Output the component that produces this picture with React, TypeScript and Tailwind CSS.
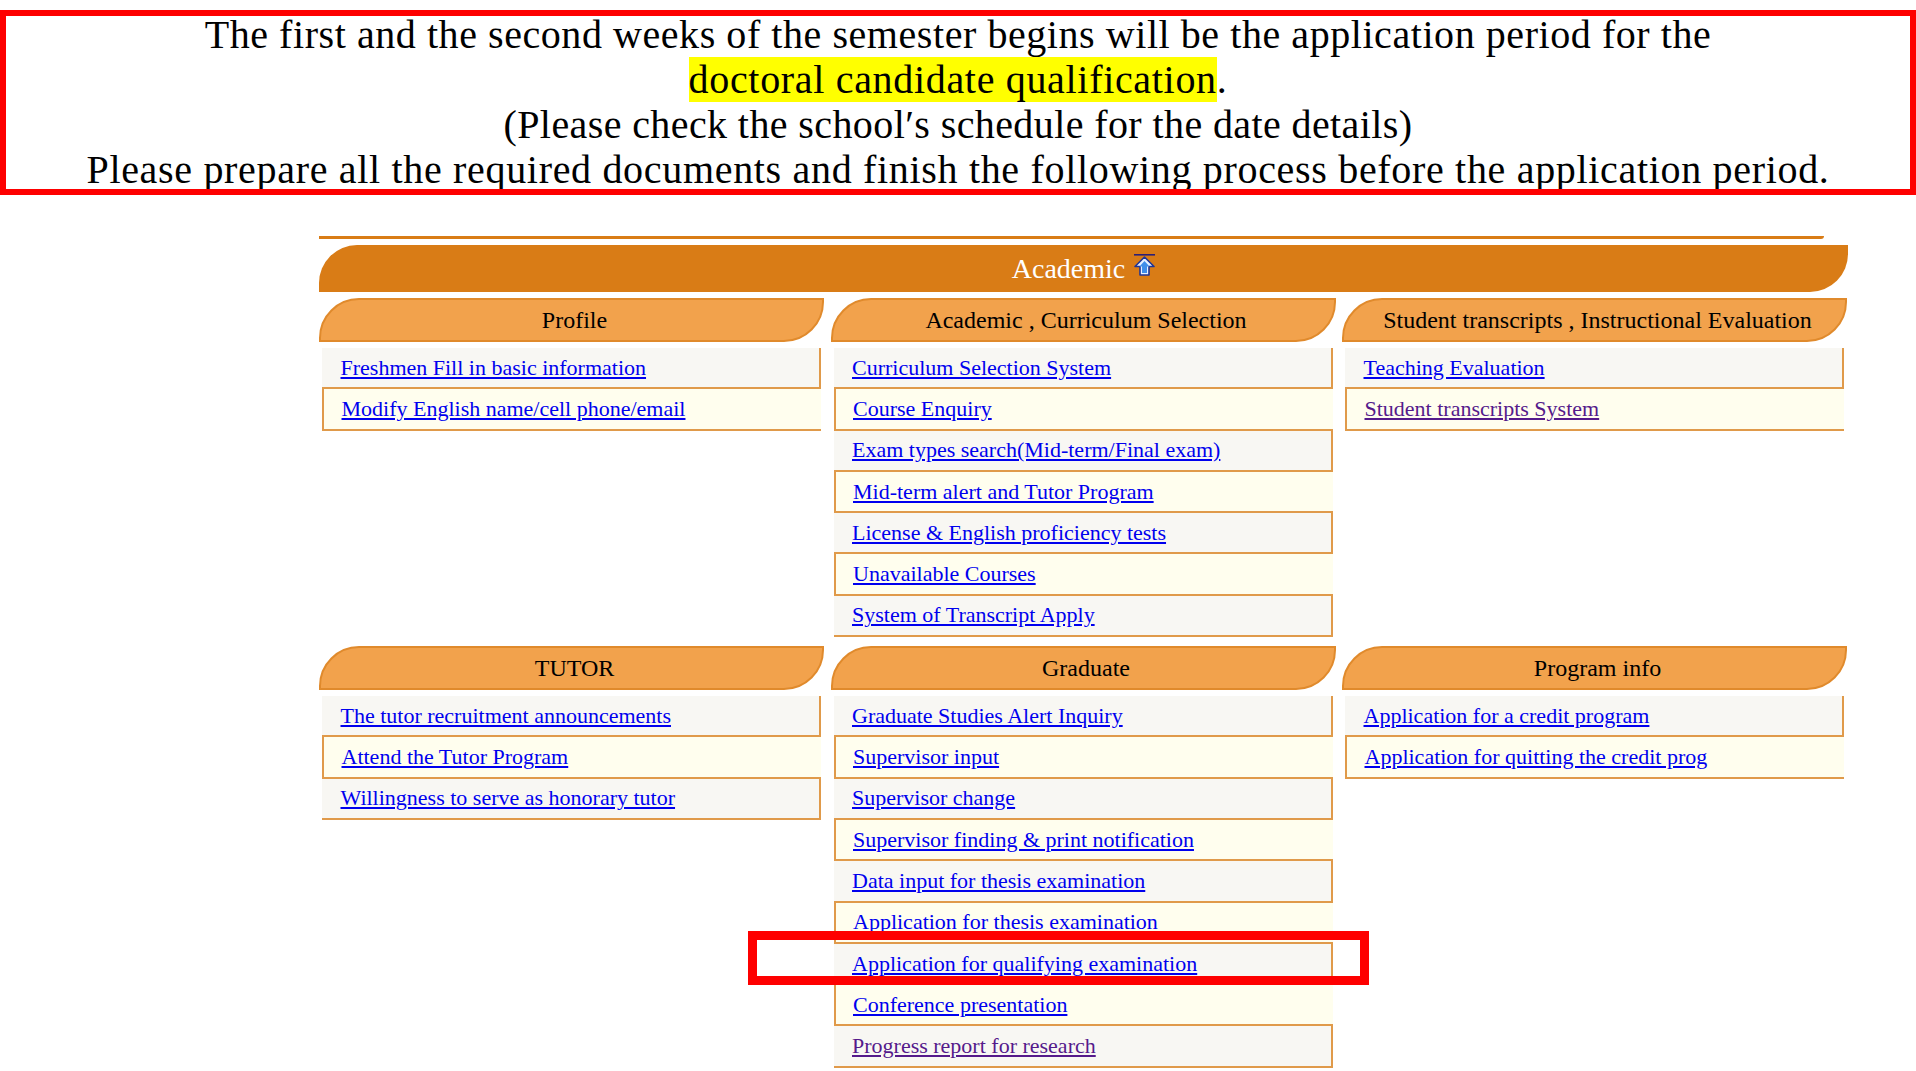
const sections: { title: string; links: [string, boolean?][] }[] = [
  { title: "Profile", links: [["Freshmen Fill in basic information"], ["Modify English name/cell phone/email"]] },
  {
    title: "Academic , Curriculum Selection",
    links: [
      ["Curriculum Selection System"],
      ["Course Enquiry"],
      ["Exam types search(Mid-term/Final exam)"],
      ["Mid-term alert and Tutor Program"],
      ["License & English proficiency tests"],
      ["Unavailable Courses"],
      ["System of Transcript Apply"],
    ],
  },
  {
    title: "Student transcripts , Instructional Evaluation",
    links: [["Teaching Evaluation"], ["Student transcripts System", true]],
  },
  {
    title: "TUTOR",
    links: [["The tutor recruitment announcements"], ["Attend the Tutor Program"], ["Willingness to serve as honorary tutor"]],
  },
  {
    title: "Graduate",
    links: [
      ["Graduate Studies Alert Inquiry"],
      ["Supervisor input"],
      ["Supervisor change"],
      ["Supervisor finding & print notification"],
      ["Data input for thesis examination"],
      ["Application for thesis examination"],
      ["Application for qualifying examination"],
      ["Conference presentation"],
      ["Progress report for research", true],
    ],
  },
  {
    title: "Program info",
    links: [["Application for a credit program"], ["Application for quitting the credit prog"]],
  },
];

function Section({ title, links }: { title: string; links: [string, boolean?][] }) {
  return (
    <div className="flex flex-col">
      <div className="flex h-[44px] items-center justify-center rounded-tl-[40px] rounded-br-[40px] border-2 border-[#e08a2c] bg-[#f2a24c] pl-[6px] text-[24px] text-black">
        {title}
      </div>
      <div className="mt-[6px] px-[3px]">
        {links.map(([label, visited], i) => (
          <div
            key={label}
            className={
              i % 2 === 0
                ? "flex h-[41.3px] items-center border-r-2 border-b-2 border-[#e09a4a] bg-[#f8f7f3] pb-[1px] pl-[18.5px] text-[22px]"
                : "flex h-[41.3px] items-center border-b-2 border-l-2 border-[#e09a4a] bg-[#fffeee] pb-[1px] pl-[17.5px] text-[22px]"
            }
          >
            <a href="#" className={visited ? "text-[#551a8b] underline" : "text-[#0000ee] underline"}>
              {label}
            </a>
          </div>
        ))}
      </div>
    </div>
  );
}

export default function App() {
  return (
    <div className="relative h-[1071px] w-[1916px] overflow-hidden bg-white pt-[12px] font-['Liberation_Serif',serif]">
      <div className="text-center text-[40px] leading-[45px] text-black">
        <p className="tracking-[0.56px]">The first and the second weeks of the semester begins will be the application period for the</p>
        <p className="tracking-[0.68px]">
          <span className="bg-[#ffff00]">doctoral candidate qualification</span>.
        </p>
        <p className="tracking-[0.4px]">(Please check the school′s schedule for the date details)</p>
        <p className="tracking-[0.68px]">Please prepare all the required documents and finish the following process before the application period.</p>
      </div>
      <div className="absolute top-[10px] left-0 h-[185px] w-full border-[6px] border-[#fe0000]" />

      <div className="mt-[44px] ml-[319px] w-[1529px]">
        <div className="mr-[24px] h-[3px] rounded-br-[8px] bg-[#d97c16]" />
        <div className="mt-[6px] flex h-[47px] items-center justify-center gap-[9px] rounded-tl-[38px] rounded-br-[38px] bg-[#d97c16] text-[28px] text-white">
          <span>Academic</span>
          <svg viewBox="0 0 21 22" className="mb-[7px] h-[22px] w-[21px]">
            <rect x="0" y="0" width="21" height="1.6" fill="#2b1f78" />
            <path d="M10.5 3 L20 12.5 H15 V21 H6 V12.5 H1 Z" fill="#e6f0ff" stroke="#1f3596" strokeWidth="1.6" strokeLinejoin="round" />
            <path d="M10.5 7 L15.5 12.5 H13 V19 H8 V12.5 H5.5 Z" fill="#3f8eea" />
          </svg>
        </div>
        <div className="mt-[6px] grid grid-cols-[505px_505px_505px] gap-x-[6.5px]">
          <Section {...sections[0]} />
          <Section {...sections[1]} />
          <Section {...sections[2]} />
        </div>
        <div className="mt-[9px] grid grid-cols-[505px_505px_505px] gap-x-[6.5px]">
          <Section {...sections[3]} />
          <Section {...sections[4]} />
          <Section {...sections[5]} />
        </div>
      </div>

      <div className="absolute top-[931px] left-[748px] h-[54px] w-[621px] border-[9px] border-[#fe0000]" />
    </div>
  );
}
